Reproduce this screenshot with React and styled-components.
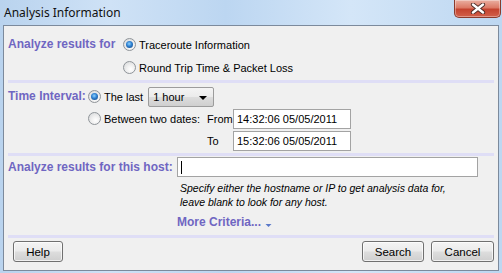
import React from 'react'
import styled, { createGlobalStyle } from 'styled-components';

const GlobalStyle = createGlobalStyle`
    html, body {
        margin:0;
        padding:0;
        background:#ffffff;
    }
    body {
        font-family:"Liberation Sans", Arial, sans-serif;
        font-size:11px;
        color:#000;
    }
`

const Window = styled.div`
    width:502px;
    height:273px;
    display:flex;
    flex-direction:column;
    background:linear-gradient(to right, #b9d3ee 0%, #cfe2f6 22%, #bcd6f1 45%, #d4e6f8 70%, #bdd7f1 100%);
    box-sizing:border-box;
`
const TitleBar = styled.div`
    height:25px;
    display:flex;
    justify-content:space-between;
    align-items:flex-start;
    flex-shrink:0;
`
const Title = styled.div`
    height:25px;
    line-height:25px;
    padding-left:4px;
    font-family:"Noto Sans", "Open Sans", sans-serif;
    font-size:12px;
    color:#111;
`
const CloseButton = styled.div`
    width:47px;
    height:18px;
    margin-right:1px;
    box-sizing:border-box;
    border:1px solid #8a3a2c;
    border-top:none;
    border-radius:0 0 5px 5px;
    background:linear-gradient(to bottom, #eab0a2 0%, #dc7a66 45%, #c4432f 55%, #d2604a 100%);
    display:flex;
    align-items:center;
    justify-content:center;
    box-shadow:inset 0 0 0 1px rgba(255,255,255,0.35);
`
const Panel = styled.div`
    margin:0 3px 2px 3px;
    height:246px;
    box-sizing:border-box;
    border:1px solid #7c8a9c;
    background:#f0f0f0;
    display:flex;
    flex-direction:column;
`
const Section = styled.div`
    display:flex;
    padding:${p => p.$pad || '0'};
    padding-left:4px;
`
const Separator = styled.div`
    height:3px;
    margin:0 4px;
    background:#dfdef6;
    flex-shrink:0;
`
const SectionLabel = styled.div`
    width:${p => p.$w}px;
    flex-shrink:0;
    height:${p => p.$h || 21}px;
    line-height:${p => p.$h || 21}px;
    font-weight:700;
    font-size:12px;
    color:#6f66c2;
    white-space:nowrap;
`
const Options = styled.div`
    display:flex;
    flex-direction:column;
    gap:${p => p.$gap || 0}px;
`
const OptionRow = styled.div`
    display:flex;
    align-items:center;
    height:${p => p.$h || 21}px;
`
const OptionCell = styled.label`
    display:flex;
    align-items:center;
    gap:3px;
    width:${p => (p.$w ? `${p.$w}px` : 'auto')};
    flex-shrink:0;
    white-space:nowrap;
    font-size:11px;
`
const Radio = styled.span`
    width:13px;
    height:13px;
    box-sizing:border-box;
    border-radius:50%;
    border:1px solid #8f9499;
    background:radial-gradient(circle at 60% 65%, #ffffff 0%, #f0f0f0 40%, #d2d4d6 100%);
    display:inline-flex;
    align-items:center;
    justify-content:center;
    flex-shrink:0;
    &::after {
        content:'';
        display:${p => (p.$checked ? 'block' : 'none')};
        width:7px;
        height:7px;
        border-radius:50%;
        background:radial-gradient(circle at 45% 40%, #8fd3ff 0%, #2d7fd0 45%, #163f73 100%);
    }
`
const Dropdown = styled.div`
    width:66px;
    height:20px;
    margin-left:5px;
    box-sizing:border-box;
    border:1px solid #9c9c9c;
    border-radius:2px;
    background:linear-gradient(to bottom, #f4f4f4 0%, #ebebeb 50%, #dddddd 51%, #cfcfcf 100%);
    display:flex;
    align-items:center;
    justify-content:space-between;
    padding:0 6px 0 4px;
    font-size:11px;
`
const Caret = styled.span`
    width:0;
    height:0;
    border-left:4px solid transparent;
    border-right:4px solid transparent;
    border-top:4px solid #000;
    margin-top:2px;
`
const DateLabel = styled.span`
    width:26px;
    flex-shrink:0;
    font-size:11px;
`
const TextField = styled.div`
    width:${p => p.$w}px;
    height:20px;
    box-sizing:border-box;
    border:1px solid #a3a3a3;
    background:#fff;
    display:flex;
    align-items:center;
    padding-left:3px;
    font-size:11px;
    white-space:nowrap;
`
const TextCursor = styled.span`
    width:1px;
    height:13px;
    background:#000;
`
const HostBlock = styled.div`
    display:flex;
    flex-direction:column;
`
const HelpText = styled.div`
    margin-top:4px;
    padding-left:3px;
    font-style:italic;
    font-size:10.5px;
    line-height:14px;
`
const MoreLink = styled.div`
    margin-top:6px;
    height:14px;
    line-height:14px;
    display:flex;
    align-items:center;
    gap:4px;
    font-weight:700;
    font-size:12px;
    color:#6f66c2;
`
const ButtonBar = styled.div`
    display:flex;
    align-items:center;
    padding:3px 4px 7px 9px;
    gap:7px;
`
const Spacer = styled.div`
    flex:1;
`
const Button = styled.button`
    width:${p => p.$w}px;
    height:21px;
    box-sizing:border-box;
    border:1px solid #707070;
    border-radius:3px;
    background:linear-gradient(to bottom, #f4f4f4 0%, #ebebeb 48%, #dddddd 52%, #cfcfcf 100%);
    box-shadow:inset 0 0 0 1px rgba(255,255,255,0.7);
    font-family:"Liberation Sans", Arial, sans-serif;
    font-size:11.5px;
    color:#000;
    padding:0;
    cursor:default;
`

const CloseGlyph = () => (
    <svg width="16" height="11" viewBox="0 0 16 11">
        <path d="M3 1.5 L13 9.5 M13 1.5 L3 9.5" stroke="#4a2a25" strokeWidth="4.2" strokeLinecap="round" fill="none"/>
        <path d="M3 1.5 L13 9.5 M13 1.5 L3 9.5" stroke="#ffffff" strokeWidth="2.4" strokeLinecap="round" fill="none"/>
    </svg>
)

const SmallArrow = () => (
    <svg width="7" height="5" viewBox="0 0 7 5" style={{ marginTop: 6 }}>
        <path d="M0.5 1 L3.5 4 L6.5 1 Z" fill="#5a78c8"/>
    </svg>
)

const App = () => {

  return (
    <>
    <GlobalStyle/>
    <Window>
        <TitleBar>
            <Title>Analysis Information</Title>
            <CloseButton><CloseGlyph/></CloseButton>
        </TitleBar>
        <Panel>
            <Section $pad="7px 0 1px 0">
                <SectionLabel $w={115} $h={23}>Analyze results for</SectionLabel>
                <Options>
                    <OptionRow $h={23}>
                        <OptionCell><Radio $checked/>Traceroute Information</OptionCell>
                    </OptionRow>
                    <OptionRow $h={23}>
                        <OptionCell><Radio/>Round Trip Time &amp; Packet Loss</OptionCell>
                    </OptionRow>
                </Options>
            </Section>
            <Separator/>
            <Section $pad="3px 0 2px 0">
                <SectionLabel $w={80}>Time Interval:</SectionLabel>
                <Options $gap={1}>
                    <OptionRow>
                        <OptionCell><Radio $checked/>The last</OptionCell>
                        <Dropdown>1 hour<Caret/></Dropdown>
                    </OptionRow>
                    <OptionRow>
                        <OptionCell $w={119}><Radio/>Between two dates:</OptionCell>
                        <DateLabel>From</DateLabel>
                        <TextField $w={118}>14:32:06 05/05/2011</TextField>
                    </OptionRow>
                    <OptionRow>
                        <OptionCell $w={119}/>
                        <DateLabel>To</DateLabel>
                        <TextField $w={118}>15:32:06 05/05/2011</TextField>
                    </OptionRow>
                </Options>
            </Section>
            <Separator/>
            <Section $pad="1px 0 6px 0">
                <SectionLabel $w={169} $h={20}>Analyze results for this host:</SectionLabel>
                <HostBlock>
                    <TextField $w={301}><TextCursor/></TextField>
                    <HelpText>
                        Specify either the hostname or IP to get analysis data for,<br/>
                        leave blank to look for any host.
                    </HelpText>
                    <MoreLink>More Criteria... <SmallArrow/></MoreLink>
                </HostBlock>
            </Section>
            <Separator/>
            <ButtonBar>
                <Button $w={50}>Help</Button>
                <Spacer/>
                <Button $w={62}>Search</Button>
                <Button $w={63}>Cancel</Button>
            </ButtonBar>
        </Panel>
    </Window>
    </>
  )
}

export default App
